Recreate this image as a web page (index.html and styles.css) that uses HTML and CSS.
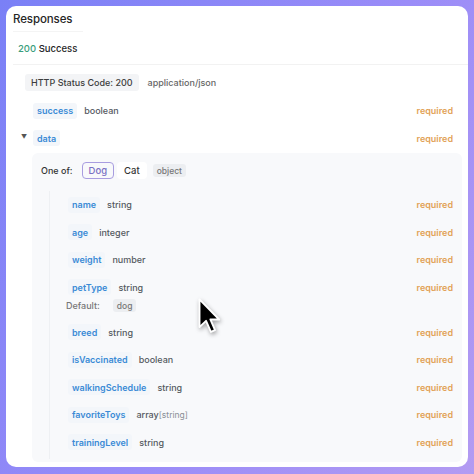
FILE: index.html
```html
<!DOCTYPE html>
<html lang="en">
<head>
<meta charset="utf-8">
<title>Responses</title>
<link rel="stylesheet" href="styles.css">
</head>
<body>
<div class="card">
  <div class="title">Responses</div>
  <div class="title-rule"></div>
  <div class="status"><span class="code">200</span> Success</div>
  <div class="body">
    <div class="meta">
      <span class="tag tag-http">HTTP Status Code: 200</span>
      <span class="mime">application/json</span>
    </div>
    <div class="row">
      <span class="caret-space"></span>
      <span class="field">success</span><span class="type">boolean</span>
      <span class="req">required</span>
    </div>
    <div class="row">
      <span class="caret-space"><span class="caret">&#9660;</span></span>
      <span class="field">data</span>
      <span class="req">required</span>
    </div>
    <div class="oneof">
      <div class="oneof-head">
        <span class="oneof-label">One of:</span>
        <span class="opt opt-active">Dog</span>
        <span class="opt">Cat</span>
        <span class="tag tag-type">object</span>
      </div>
      <div class="props">
        <div class="row"><span class="field">name</span><span class="type">string</span><span class="req">required</span></div>
        <div class="row"><span class="field">age</span><span class="type">integer</span><span class="req">required</span></div>
        <div class="row"><span class="field">weight</span><span class="type">number</span><span class="req">required</span></div>
        <div class="row"><span class="field">petType</span><span class="type">string</span><span class="req">required</span></div>
        <div class="default"><span class="default-label">Default:</span><span class="tag tag-type">dog</span></div>
        <div class="row"><span class="field">breed</span><span class="type">string</span><span class="req">required</span></div>
        <div class="row"><span class="field">isVaccinated</span><span class="type">boolean</span><span class="req">required</span></div>
        <div class="row"><span class="field">walkingSchedule</span><span class="type">string</span><span class="req">required</span></div>
        <div class="row"><span class="field">favoriteToys</span><span class="type">array<span class="sub">[string]</span></span><span class="req">required</span></div>
        <div class="row"><span class="field">trainingLevel</span><span class="type">string</span><span class="req">required</span></div>
      </div>
    </div>
  </div>
</div>
<svg class="cursor" width="26" height="38" viewBox="-2 -2 15 22">
  <path d="M0 0 L0 16 L3.8 12.4 L6.6 18.8 L9 17.8 L6.3 11.6 L11.4 11.6 Z" fill="#000" stroke="#fff" stroke-width="1.1" stroke-linejoin="round"/>
</svg>
</body>
</html>
```

FILE: styles.css
```css
* { box-sizing: border-box; }

html, body {
  margin: 0;
  width: 474px;
  height: 474px;
  overflow: hidden;
}

body {
  padding: 6px;
  background: linear-gradient(120deg, #7a80f6 0%, #9a8cf8 55%, #b39bf2 100%);
  font-family: Inter, "Noto Sans", sans-serif;
  position: relative;
}

.card {
  width: 462px;
  height: 461px;
  background: #fff;
  border-radius: 10px;
  overflow: hidden;
}

.title {
  padding: 5px 0 0 7px;
  height: 25px;
  font-size: 11.5px;
  line-height: 16px;
  font-weight: 500;
  letter-spacing: -0.1px;
  color: #262626;
}

.title-rule {
  margin-left: 7px;
  width: 70px;
  height: 1px;
  background: #f4f4f4;
}

.status {
  margin-left: 7px;
  padding: 2px 0 0 5px;
  height: 33px;
  line-height: 29px;
  font-size: 9.5px;
  font-weight: 500;
  color: #262626;
  border-bottom: 1px solid #f2f2f2;
}

.code { color: #3a9e7c; }

.body {
  padding: 9px 15px 0 19px;
}

.meta {
  display: flex;
  align-items: center;
  gap: 9px;
  height: 17px;
  margin-bottom: 6px;
}

.tag {
  display: inline-flex;
  align-items: center;
  border-radius: 3px;
  background: #f3f4f6;
  font-size: 9px;
  color: #3d3d3d;
}

.tag-http {
  height: 17px;
  padding: 0 6px;
  font-weight: 500;
}

.mime {
  font-size: 9px;
  color: #666;
  font-weight: 500;
}

.row {
  display: flex;
  align-items: center;
  height: 27.5px;
  font-size: 9px;
}

.caret-space {
  width: 8px;
  flex: none;
  position: relative;
}

.caret {
  position: absolute;
  left: -4px;
  top: -5px;
  font-size: 6px;
  color: #555;
}

.field {
  display: inline-flex;
  align-items: center;
  height: 16px;
  padding: 0 4px;
  border-radius: 3px;
  background: #f3f6fa;
  color: #3b8bd6;
  font-weight: 600;
  margin-right: 7px;
}

.type {
  color: #55595f;
  font-weight: 500;
}

.sub {
  color: #8a8f96;
  font-size: 8.5px;
  font-weight: 400;
}

.req {
  margin-left: auto;
  color: #e2a257;
  font-weight: 600;
}

.oneof {
  margin: 1px -9px 0 7px;
  height: 309px;
  border-radius: 6px;
  background: #f8f9fb;
  padding: 9px 9px 0 9px;
}

.oneof-head {
  display: flex;
  align-items: center;
  height: 17px;
  font-size: 9px;
  font-weight: 500;
  color: #333;
}

.oneof-label { margin-right: 9px; }

.opt {
  display: inline-flex;
  align-items: center;
  justify-content: center;
  height: 17px;
  padding: 0 6px;
  border-radius: 4px;
  border: 1px solid transparent;
  background: #fff;
  margin-right: 3px;
  font-size: 9.5px;
  font-weight: 500;
}

.opt-active {
  border-color: #a89de0;
  background: transparent;
  color: #7a70c4;
}

.tag-type {
  height: 13px;
  padding: 0 4px;
  margin-left: 3px;
  font-size: 8.5px;
  color: #777;
  background: #eceef1;
}

.props {
  margin-top: 12px;
  margin-left: 8px;
  border-left: 1px solid #eef0f3;
  padding-left: 18px;
  height: 268px;
}

.default {
  display: flex;
  align-items: center;
  height: 17.5px;
  margin: -4px 0 4px -2px;
  font-size: 9px;
  font-weight: 500;
  color: #777;
}

.default-label { margin-right: 10px; }

.cursor {
  position: absolute;
  left: 196px;
  top: 296px;
  filter: drop-shadow(1px 2px 2px rgba(0,0,0,0.35));
}
```
